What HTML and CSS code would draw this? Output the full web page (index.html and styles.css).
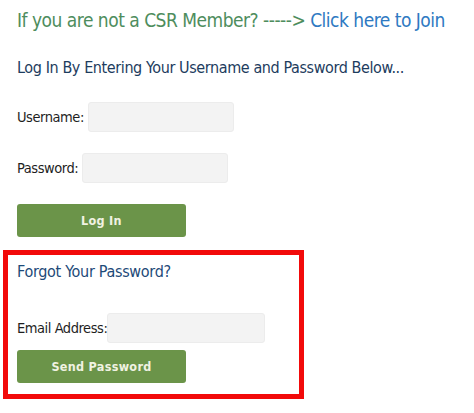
FILE: index.html
```html
<!DOCTYPE html>
<html>
<head>
<meta charset="utf-8">
<link rel="stylesheet" href="styles.css">
</head>
<body>
<p class="join">If you are not a CSR Member? -----&gt; <a class="join-link" href="#">Click here to Join</a></p>
<p class="intro">Log In By Entering Your Username and Password Below...</p>
<form class="login">
  <div class="row row-user"><label class="lbl lbl-gap">Username:</label><input class="field" type="text"></div>
  <div class="row row-pass"><label class="lbl lbl-gap">Password:</label><input class="field" type="password"></div>
  <button class="btn btn-login" type="button">Log In</button>
</form>
<div class="forgot">
  <p class="forgot-title">Forgot Your Password?</p>
  <div class="row row-email"><label class="lbl">Email Address:</label><input class="field field-email" type="text"></div>
  <button class="btn btn-send" type="button">Send Password</button>
</div>
</body>
</html>
```
FILE: styles.css
```css
html, body { margin: 0; padding: 0; background: #fff; }
body {
  font-family: "DejaVu Sans Condensed", "DejaVu Sans", sans-serif;
  color: #1b1b1b;
  padding-top: 8px;
}
p { margin: 0; }
.join {
  font-size: 19px;
  line-height: 24px;
  letter-spacing: -0.5px;
  color: #4e8d5d;
  margin-left: 17px;
  white-space: nowrap;
}
.join-link { color: #2e79c2; text-decoration: none; }
.intro {
  margin: 26px 0 0 17px;
  font-size: 16px;
  line-height: 20px;
  letter-spacing: -0.4px;
  color: #1d3c5e;
}
.login { margin: 24px 0 0 17px; display: flex; flex-direction: column; align-items: flex-start; }
.row { display: flex; align-items: center; white-space: nowrap; }
.lbl { font-size: 14.5px; line-height: 30px; letter-spacing: -0.45px; color: #1e1e1e; }
.lbl-gap { margin-right: 4px; }
.field {
  box-sizing: border-box;
  width: 146px;
  height: 30px;
  margin: 0;
  background: #f3f3f3;
  border: 1px solid #ececec;
  border-radius: 3px;
  font: inherit;
}
.row-pass { margin-top: 21px; }
.btn {
  box-sizing: border-box;
  width: 169px;
  height: 33px;
  border: none;
  border-radius: 3px;
  background: #6b9449;
  color: #f0f2e2;
  font-family: "DejaVu Sans Condensed", "DejaVu Sans", sans-serif;
  font-size: 12.5px;
  font-weight: bold;
  letter-spacing: 0.3px;
  padding: 0;
}
.btn-login { margin-top: 21px; }
.forgot {
  box-sizing: border-box;
  margin: 13px 0 0 3px;
  width: 301px;
  height: 149px;
  border: 5px solid #f20a0a;
  padding: 7px 0 0 9px;
}
.forgot-title {
  font-size: 16px;
  line-height: 20px;
  letter-spacing: -0.3px;
  color: #1d4a78;
}
.row-email { margin-top: 31px; }
.field-email { width: 158px; }
.btn-send { margin-top: 7px; }
```
